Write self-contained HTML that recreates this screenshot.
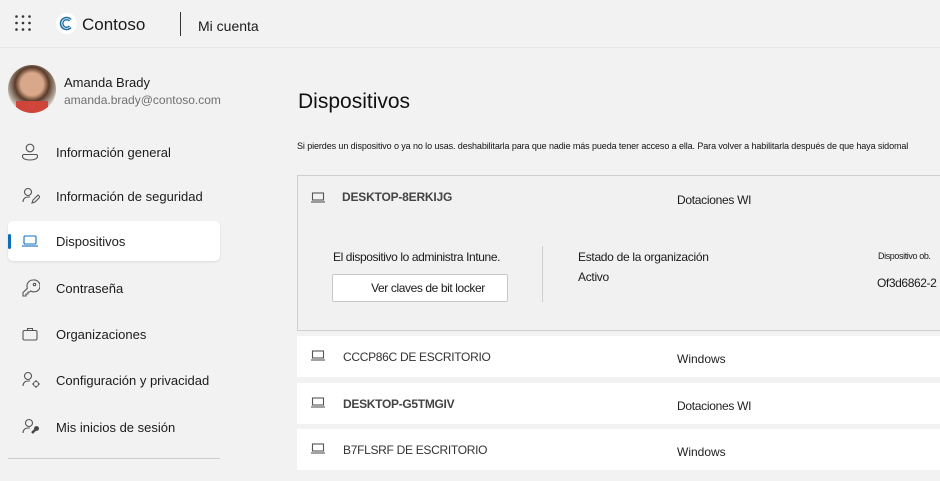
<!DOCTYPE html>
<html><head><meta charset="utf-8"><style>
*{margin:0;padding:0;box-sizing:border-box}
body{width:940px;height:481px;overflow:hidden;background:#f2f2f2;font-family:"Liberation Sans",sans-serif;color:#1b1b1b;position:relative}
.abs{position:absolute}
.hdr{left:0;top:0;width:940px;height:48px;border-bottom:1px solid #e6e6e6;background:#f2f2f2}
.nav{left:8px;width:212px;height:40px;font-size:13px;display:flex;align-items:center}
.nav svg{position:absolute;left:14px}
.nav span{position:absolute;left:48px}
.row{left:297px;width:643px;height:41px;background:#fff;font-size:12px}
.row .n{position:absolute;left:46px;top:15px;color:#333;letter-spacing:-0.3px}
.row .t{position:absolute;left:380px;top:16px;color:#222}
.row svg{position:absolute;left:14px;top:14px}
</style></head><body>
<div class="abs hdr"></div>
<svg class="abs" style="left:15px;top:15px" width="16" height="16" viewBox="0 0 16 16" fill="#333"><circle cx="1.5" cy="1.5" r="1.3"/><circle cx="8" cy="1.5" r="1.3"/><circle cx="14.5" cy="1.5" r="1.3"/><circle cx="1.5" cy="8" r="1.3"/><circle cx="8" cy="8" r="1.3"/><circle cx="14.5" cy="8" r="1.3"/><circle cx="1.5" cy="14.5" r="1.3"/><circle cx="8" cy="14.5" r="1.3"/><circle cx="14.5" cy="14.5" r="1.3"/></svg>
<svg class="abs" style="left:56px;top:13px" width="21" height="21" viewBox="0 0 21 21"><circle cx="10.5" cy="10.5" r="10.5" fill="#fff"/><path d="M15 6.5a6 6 0 1 0 0 8" fill="none" stroke="#1d6fa5" stroke-width="1.6"/><path d="M13.5 8a3.8 3.8 0 1 0 0 5" fill="none" stroke="#1d6fa5" stroke-width="1.4"/></svg>
<div class="abs" style="left:82px;top:15px;font-size:17px">Contoso</div>
<div class="abs" style="left:180px;top:12px;width:1px;height:24px;background:#333"></div>
<div class="abs" style="left:198px;top:18px;font-size:14px">Mi cuenta</div>
<div class="abs" style="left:8px;top:65px;width:48px;height:48px;border-radius:50%;background:radial-gradient(circle at 50% 40%,#d9a88a 0 30%,#5a3b2a 45%,#c9c2b8 70%);overflow:hidden"><div style="position:absolute;left:8px;top:36px;width:32px;height:14px;background:#d0453a"></div></div>
<div class="abs" style="left:64px;top:75px;font-size:13px">Amanda Brady</div>
<div class="abs" style="left:64px;top:93px;font-size:12px;color:#707070">amanda.brady@contoso.com</div>

<div class="abs nav" style="top:132px"><svg width="16" height="18" viewBox="0 0 16 18" fill="none" stroke="#555" stroke-width="1.1"><circle cx="8" cy="5" r="3.8"/><path d="M2 11.5h12a1.5 1.5 0 0 1 1.5 1.5v.5c0 2-3 3.5-7.5 3.5S.5 15.5.5 13.5V13A1.5 1.5 0 0 1 2 11.5z"/></svg><span>Información general</span></div>
<div class="abs nav" style="top:176px"><svg width="18" height="18" viewBox="0 0 18 18" fill="none" stroke="#555" stroke-width="1.1"><circle cx="6" cy="5" r="3.5"/><path d="M1 15c0-3 2-5 5-5h2"/><path d="M10 16l1-3 5-5 2 2-5 5z"/></svg><span>Información de seguridad</span></div>
<div class="abs nav" style="top:221px;background:#fff;border-radius:5px;box-shadow:0 1px 2px rgba(0,0,0,.1)"><div style="position:absolute;left:0;top:13px;width:3px;height:15px;background:#0f6cbd;border-radius:2px"></div><svg width="16" height="12" viewBox="0 0 16 12" fill="none" stroke="#0f6cbd" stroke-width="1.1"><rect x="2" y="1" width="12" height="8" rx="1"/><path d="M0 11h16"/></svg><span>Dispositivos</span></div>
<div class="abs nav" style="top:268px"><svg width="18" height="18" viewBox="0 0 18 18" fill="none" stroke="#555" stroke-width="1.1"><path d="M11 1a6 6 0 0 0-5.6 8.2L1 13.6V17h3v-2h2v-2h1.8l1-1A6 6 0 1 0 11 1z"/><circle cx="12.5" cy="5.5" r="1.2"/></svg><span>Contraseña</span></div>
<div class="abs nav" style="top:314px"><svg width="16" height="14" viewBox="0 0 16 14" fill="none" stroke="#555" stroke-width="1.1"><rect x="1" y="3.5" width="14" height="9.5" rx="1.5"/><path d="M5.5 3.5V1.5h5v2"/></svg><span>Organizaciones</span></div>
<div class="abs nav" style="top:360px"><svg width="20" height="18" viewBox="0 0 20 18" fill="none" stroke="#555" stroke-width="1.1"><circle cx="6" cy="5" r="3.5"/><path d="M1 15c0-3 2-5 5-5h2"/><circle cx="14" cy="13" r="2.5"/><path d="M14 9v1.5M14 15.5V17M10 13h1.5M16.5 13H18"/></svg><span>Configuración y privacidad</span></div>
<div class="abs nav" style="top:407px"><svg width="18" height="18" viewBox="0 0 18 18" fill="none" stroke="#555" stroke-width="1.1"><circle cx="7" cy="5" r="3.5"/><path d="M1 15c0-3 2-5 5-5h2"/><path d="M10 15l4-4" stroke-width="2.5" stroke="#444"/><circle cx="14.5" cy="10.5" r="2" fill="#444"/></svg><span>Mis inicios de sesión</span></div>
<div class="abs" style="left:8px;top:458px;width:212px;height:1px;background:#ccc"></div>

<div class="abs" style="left:298px;top:90px;font-size:21px;color:#111">Dispositivos</div>
<div class="abs" style="left:297px;top:141px;font-size:9px;letter-spacing:-0.1px;color:#111;white-space:nowrap">Si pierdes un dispositivo o ya no lo usas. deshabilitarla para que nadie más pueda tener acceso a ella. Para volver a habilitarla después de que haya sidomal</div>

<div class="abs" style="left:297px;top:175px;width:650px;height:156px;background:#f1f1f1;border:1px solid #cfcfcf"></div>
<svg class="abs" style="left:311px;top:192px" width="14" height="11" viewBox="0 0 14 11" fill="none" stroke="#555" stroke-width="1.1"><rect x="1.5" y="1" width="11" height="7"/><path d="M0 10h14"/></svg>
<div class="abs" style="left:342px;top:190px;font-size:12px;font-weight:bold;color:#444;letter-spacing:-0.2px">DESKTOP-8ERKIJG</div>
<div class="abs" style="left:677px;top:193px;font-size:12px;letter-spacing:-0.3px">Dotaciones WI</div>
<div class="abs" style="left:333px;top:250px;font-size:12px;letter-spacing:-0.4px">El dispositivo lo administra Intune.</div>
<div class="abs" style="left:332px;top:274px;width:176px;height:28px;background:#fff;border:1px solid #c8c8c8;border-radius:2px;font-size:12px;letter-spacing:-0.4px;text-align:center;line-height:26px;padding-left:16px">Ver claves de bit locker</div>
<div class="abs" style="left:542px;top:246px;width:1px;height:56px;background:#d0d0d0"></div>
<div class="abs" style="left:578px;top:250px;font-size:12px;letter-spacing:-0.3px">Estado de la organización</div>
<div class="abs" style="left:578px;top:270px;font-size:12px;letter-spacing:-0.3px">Activo</div>
<div class="abs" style="left:878px;top:251px;font-size:9px;letter-spacing:-0.4px">Dispositivo ob.</div>
<div class="abs" style="left:877px;top:276px;font-size:12px;letter-spacing:-0.4px">Of3d6862-2</div>

<div class="abs row" style="top:336px"><svg width="14" height="11" viewBox="0 0 14 11" fill="none" stroke="#555" stroke-width="1.1"><rect x="1.5" y="1" width="11" height="7"/><path d="M0 10h14"/></svg><div class="n" style="top:14px">CCCP86C DE ESCRITORIO</div><div class="t">Windows</div></div>
<div class="abs row" style="top:383px"><svg width="14" height="11" viewBox="0 0 14 11" fill="none" stroke="#555" stroke-width="1.1"><rect x="1.5" y="1" width="11" height="7"/><path d="M0 10h14"/></svg><div class="n" style="top:14px;font-weight:bold;color:#444">DESKTOP-G5TMGIV</div><div class="t" style="letter-spacing:-0.3px">Dotaciones WI</div></div>
<div class="abs row" style="top:429px"><svg width="14" height="11" viewBox="0 0 14 11" fill="none" stroke="#555" stroke-width="1.1"><rect x="1.5" y="1" width="11" height="7"/><path d="M0 10h14"/></svg><div class="n" style="top:14px">B7FLSRF DE ESCRITORIO</div><div class="t">Windows</div></div>
</body></html>
